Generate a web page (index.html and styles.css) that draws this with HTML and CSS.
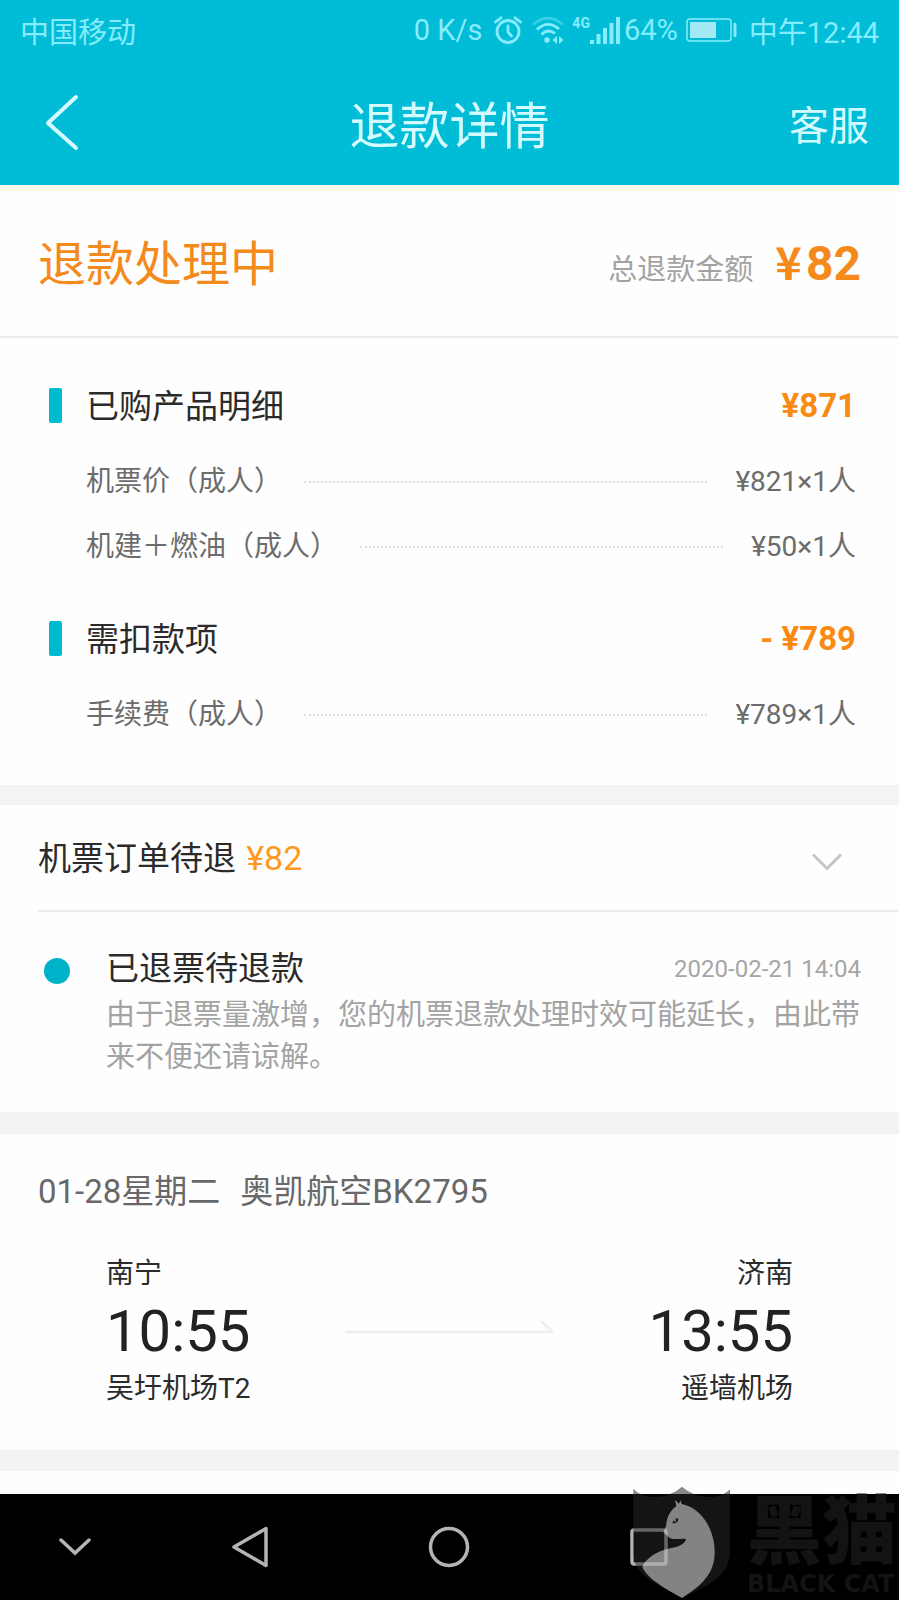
FILE: index.html
```html
<!DOCTYPE html>
<html lang="zh-CN">
<head>
<meta charset="utf-8">
<meta name="viewport" content="width=device-width, initial-scale=1">
<title>退款详情</title>
<link rel="stylesheet" href="styles.css">
</head>
<body>
<header class="top">
  <div class="status">
    <span class="carrier">中国移动</span>
    <span class="speed">0 K/s</span>
    <svg class="alarm" width="28" height="28" viewBox="0 0 28 28" fill="none" stroke="currentColor" stroke-width="2.8" stroke-linecap="round"><circle cx="14" cy="15.500" r="11"/><path d="M14 10v6l3.500 4M1.500 6L7 1.800M26.500 6L21 1.800"/></svg>
    <svg class="wifi" width="32" height="28" viewBox="0 0 32 28" fill="none" stroke="currentColor" stroke-width="2.800"><path d="M1 8.500Q16-4 31 8.500" opacity=".4"/><path d="M5 13.500Q15.500 3.500 27 13"/><path d="M9.500 18.500Q16 12 23 17.500"/><circle cx="15" cy="24" r="2.800" fill="currentColor" stroke="none"/><path d="M25 20v8l-4.500-4zM27 20v8l4.500-4z" fill="currentColor" stroke="none"/></svg>
    <span class="net">4G</span>
    <svg class="bars" width="30" height="28" viewBox="0 0 30 28" fill="currentColor"><path d="M0 24h4v4H0zM6.500 18h4v10h-4zM13 12h4v16h-4zM19.500 7h4v21h-4zM26 1h4v27h-4z"/></svg>
    <span class="percent">64%</span>
    <svg class="battery" width="51" height="24" viewBox="0 0 51 24"><rect x="1" y="1" width="44" height="22" rx="3" fill="none" stroke="currentColor" stroke-width="1.500"/><rect x="4" y="4" width="26" height="16" fill="#a4e9f4"/><rect x="47.500" y="5" width="3" height="14" rx="1" fill="currentColor"/></svg>
    <span class="clock">中午12:44</span>
  </div>
  <div class="appbar">
    <button class="back" type="button" aria-label="返回"><svg width="34" height="58" viewBox="0 0 34 58" fill="none" stroke="#d4fbff" stroke-width="4" stroke-linecap="round" stroke-linejoin="round"><path d="M31 3L3 29l28 25"/></svg></button>
    <h1 class="title">退款详情</h1>
    <a class="service" href="#service">客服</a>
  </div>
</header>

<main class="page">
  <section class="summary">
    <h2 class="state">退款处理中</h2>
    <p class="total"><span class="total-label">总退款金额</span><strong class="total-value"><span class="yen">¥</span>82</strong></p>
  </section>

  <section class="details">
    <div class="group">
      <div class="group-head"><h3 class="group-name">已购产品明细</h3><strong class="group-sum">¥871</strong></div>
      <div class="line"><span>机票价（成人）</span><i class="dots"></i><span>¥821×1人</span></div>
      <div class="line"><span>机建＋燃油（成人）</span><i class="dots"></i><span>¥50×1人</span></div>
    </div>
    <div class="group">
      <div class="group-head"><h3 class="group-name">需扣款项</h3><strong class="group-sum">- ¥789</strong></div>
      <div class="line"><span>手续费（成人）</span><i class="dots"></i><span>¥789×1人</span></div>
    </div>
  </section>

  <section class="order">
    <button class="order-head" type="button" aria-expanded="true">
      <span>机票订单待退 <span class="order-sum">¥82</span></span>
      <svg width="30" height="18" viewBox="0 0 30 18" fill="none" stroke="#c4c4c4" stroke-width="3"><path d="M1 1.500l14 14 14-14"/></svg>
    </button>
    <div class="event">
      <span class="dot"></span>
      <div class="event-body">
        <div class="event-top"><h3 class="event-name">已退票待退款</h3><time class="event-time">2020-02-21 14:04</time></div>
        <p class="event-text">由于退票量激增，您的机票退款处理时效可能延长，由此带来不便还请谅解。</p>
      </div>
    </div>
  </section>

  <section class="flight">
    <h3 class="flight-name"><span>01-28星期二</span><span>奥凯航空BK2795</span></h3>
    <div class="route">
      <div class="stop"><span class="place">南宁</span><span class="time">10:55</span><span class="place">吴圩机场T2</span></div>
      <svg class="arrow" width="210" height="14" viewBox="0 0 210 14" fill="none" stroke="#efefef" stroke-width="2.500"><path d="M0 12h208M196 1l12 11"/></svg>
      <div class="stop stop-end"><span class="place">济南</span><span class="time">13:55</span><span class="place">遥墙机场</span></div>
    </div>
  </section>
</main>

<nav class="nav">
  <button class="key" type="button" aria-label="收起"><svg width="32" height="18" viewBox="0 0 32 18" fill="none" stroke="#b4b4b4" stroke-width="3.500" stroke-linecap="round"><path d="M2 2l14 13L30 2"/></svg></button>
  <button class="key" type="button" aria-label="后退"><svg width="36" height="42" viewBox="0 0 36 42" fill="none" stroke="#b4b4b4" stroke-width="3.500" stroke-linejoin="round"><path d="M34 2.500v37L2 21z"/></svg></button>
  <button class="key" type="button" aria-label="主页"><svg width="42" height="42" viewBox="0 0 42 42" fill="none" stroke="#b4b4b4" stroke-width="3.500"><circle cx="21" cy="21" r="18.500"/></svg></button>
  <button class="key" type="button" aria-label="最近任务"><svg width="38" height="38" viewBox="0 0 38 38" fill="none" stroke="#b4b4b4" stroke-width="3.500"><rect x="2" y="2" width="34" height="34" rx="2"/></svg></button>
  <div class="mark">
    <svg class="shield" width="98" height="114" viewBox="93 44 294 342">
      <path fill="#262324" fill-opacity=".54" d="M94 52Q115 75 150 77 205 78 240 46 275 78 330 77 365 75 384 54V240C384 320 310 345 240 380 150 330 94 310 94 245z"/>
      <path fill="#fff" fill-opacity=".48" fill-rule="evenodd" d="M219 85L231 97 236 87 239 98C300 110 338 175 338 243 338 310 295 345 240 380 190 352 140 325 122 290 120 275 155 240 205 231 235 226 250 215 252 203 235 200 215 207 203 200 194 190 188 188 184 181 190 172 192 165 194 150 198 130 210 113 223 105zM211 156Q218 137 229 142 229 156 211 156z"/>
      <path fill="#bdbdbd" d="M217 145l5-2-3 12z"/>
    </svg>
    <div class="mark-words"><span class="mark-cn">黑猫</span><span class="mark-en">BLACK CAT</span></div>
  </div>
</nav>
</body>
</html>
```
FILE: styles.css
```css
* { box-sizing: border-box; }

body {
  margin: 0;
  min-height: 100vh;
  display: flex;
  flex-direction: column;
  background: #fefefe;
  color: #2b2b2b;
  font-family: Roboto, "Noto Sans CJK SC", sans-serif;
}

h1, h2, h3, p { margin: 0; font-weight: 400; }
button { border: 0; padding: 0; background: none; font: inherit; color: inherit; }
svg { display: block; flex: none; }

.top { background: #00bcd7; }

.status {
  display: flex;
  align-items: center;
  height: 60px;
  padding: 0 20px;
  color: #86ecfb;
  font-size: 29px;
  white-space: nowrap;
}
.carrier { margin-right: auto; }
.alarm { margin-left: 12px; }
.wifi { margin-left: 10px; }
.net { margin-left: 8px; align-self: flex-start; padding-top: 15px; font-size: 14px; line-height: 16px; font-weight: 700; }
.percent { margin-left: 4px; }
.battery { margin: 0 12px 0 8px; }

.appbar {
  display: grid;
  grid-template-columns: 1fr auto 1fr;
  align-items: center;
  height: 125px;
  padding: 0 30px;
  color: #d4fbff;
}
.back { justify-self: start; margin-left: 15px; }
.title { padding-top: 9px; font-size: 50px; line-height: 60px; }
.service { justify-self: end; padding-top: 8px; color: inherit; font-size: 40px; line-height: 60px; text-decoration: none; }

.page { flex: 1; }

.summary {
  display: flex;
  align-items: center;
  justify-content: space-between;
  height: 153px;
  padding: 2px 38px 0;
  border-top: 7px solid #fffbea;
  border-bottom: 2px solid #ececec;
}
.state { color: #f58a1c; font-size: 48px; line-height: 60px; }
.total { display: flex; align-items: baseline; gap: 22px; line-height: 60px; }
.total-label { color: #a3a3a3; font-size: 29px; }
.total-value { color: #f58a1c; font-size: 48px; font-weight: 700; }
.yen { margin-right: 4px; font-family: "Noto Sans CJK SC", sans-serif; font-size: 45px; font-weight: 700; }

.details {
  display: flex;
  flex-direction: column;
  gap: 17px;
  padding: 24px 43px 39px 49px;
}
.group-head { display: flex; align-items: center; height: 86px; }
.group-head::before {
  content: "";
  width: 13px;
  height: 35px;
  margin-right: 24px;
  border-radius: 2px;
  background: #00bad2;
}
.group-name { flex: 1; padding-bottom: 2px; font-size: 33px; }
.group-sum { color: #f98a12; font-size: 33px; font-weight: 700; }
.line {
  display: flex;
  align-items: center;
  height: 65px;
  padding: 0 0 4px 37px;
  color: #6c6c6c;
  font-size: 28px;
}
.dots { flex: 1; margin: 6px 28px 0 22px; border-top: 2px dotted #dedede; }

.order { border-top: 20px solid #f4f4f4; }
.order-head {
  display: flex;
  align-items: center;
  justify-content: space-between;
  width: calc(100% - 38px);
  height: 107px;
  margin-left: 38px;
  padding: 0 57px 4px 0;
  border-bottom: 2px solid #ececec;
  font-size: 33px;
  text-align: left;
}
.order-head svg { margin-top: 12px; }
.order-sum { margin-left: 2px; color: #fd9a1e; font-size: 34px; }
.event { display: flex; gap: 36px; padding: 36px 38px 34px 44px; }
.dot { flex: none; width: 26px; height: 26px; margin-top: 10px; border-radius: 50%; background: #00b1ca; }
.event-body { flex: 1; }
.event-top { display: flex; align-items: center; justify-content: space-between; height: 42px; margin-bottom: 4px; }
.event-name { font-size: 33px; line-height: 42px; }
.event-time { color: #a6a6a6; font-size: 24px; }
.event-text { color: #a3a3a3; font-size: 29px; line-height: 42px; }

.flight {
  padding: 38px 106px 44px 38px;
  border-top: 22px solid #f3f3f3;
  border-bottom: 21px solid #f3f3f3;
}
.flight-name { display: flex; gap: 20px; color: #686868; font-size: 33px; line-height: 40px; }
.route { display: flex; align-items: center; justify-content: space-between; margin-top: 44px; padding-left: 68px; }
.stop { display: flex; flex-direction: column; flex: 1; }
.stop-end { align-items: flex-end; }
.place { font-size: 28px; line-height: 35px; }
.time { font-size: 58px; line-height: 80px; color: #222; }
.arrow { margin-bottom: 8px; }

.nav {
  position: relative;
  display: grid;
  grid-template-columns: 150px 1fr 1fr 1fr 150px;
  align-items: center;
  height: 106px;
  margin-top: 23px;
  background: #000;
}
.key { display: grid; place-items: center; height: 100%; }

/* Brand mark laid over the right end of the key bar */
.mark {
  position: absolute;
  right: 2px;
  bottom: 0;
  display: flex;
  align-items: flex-end;
  gap: 16px;
  pointer-events: none;
}
.mark-words { display: flex; flex-direction: column; gap: 6px; color: #141213; white-space: nowrap; }
.mark-cn { font-family: "Noto Sans CJK SC", sans-serif; font-size: 75px; line-height: 72px; font-weight: 900; }
.mark-en { font-family: "DejaVu Sans", sans-serif; font-size: 24px; line-height: 32px; font-weight: 700; }
```
